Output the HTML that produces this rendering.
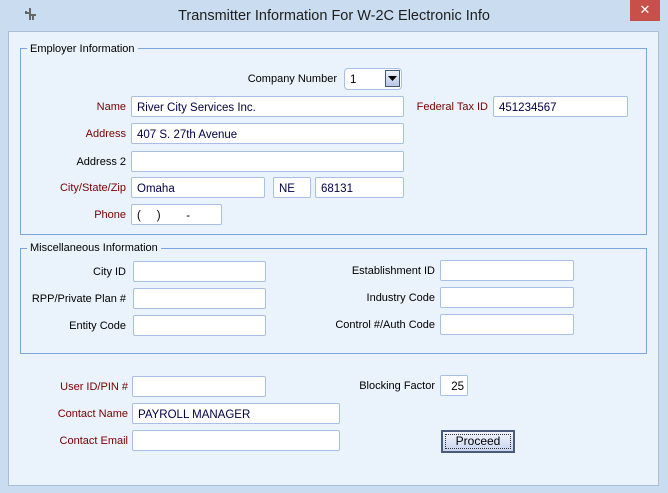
<!DOCTYPE html>
<html><head><style>
body{margin:0;width:668px;height:493px;overflow:hidden;background:#cadcf0;font-family:"Liberation Sans",sans-serif;font-size:11px;position:relative}
div,span{position:absolute;box-sizing:border-box}
.client{left:8px;top:31px;width:651px;height:455px;background:#eaf2fb;border:1px solid #a9bfd6}
.title{left:0;top:8px;width:668px;text-align:center;font-size:14.5px;color:#1e1e1e}
.close{left:630px;top:0;width:30px;height:21px;background:#c7504a;color:#fff;text-align:center;font-size:13px;line-height:20px}
.g{border:1px solid #7aa6dc}
.gt{background:#eaf2fb;padding:0 3px;color:#000;font-size:11px}
.in{background:#fff;border:1px solid #a8c0e6;border-radius:2px;height:21px;padding:3px 5px 0;line-height:16px;color:#000046;font-size:11.5px;white-space:nowrap}
.l{text-align:right;width:140px;white-space:nowrap;color:#000}
.r{color:#7a0000}
.btn{left:441px;top:430px;width:74px;height:23px;border:2px solid #4c5c78;background:linear-gradient(#f2f5fb,#c8d4ee);text-align:center;line-height:19px;font-size:12px;color:#000}
.btn span{left:2px;top:2px;right:2px;bottom:2px;border:1px dotted #333}
</style></head><body>
<div style="left:24px;top:7px;width:14px;height:14px">
<svg width="14" height="14"><path d="M6 1v12M1 6h5M6 8h6M9 8v5M2 4v2" stroke="#666" stroke-width="2" fill="none"/></svg></div>
<div class="title">Transmitter Information For W-2C Electronic Info</div>
<div class="close">✕</div>
<div class="client"></div>

<div class="g" style="left:20px;top:48px;width:627px;height:187px"></div>
<span class="gt" style="left:27px;top:43px">Employer Information</span>
<div class="g" style="left:20px;top:248px;width:627px;height:106px"></div>
<span class="gt" style="left:27px;top:242px">Miscellaneous Information</span>

<span class="l" style="left:197px;top:73px">Company Number</span>
<div class="in" style="left:344px;top:68px;width:58px;height:22px;border-radius:4px;color:#000">1</div>
<div style="left:385px;top:70px;width:15px;height:17px;border:1px solid #44556e;background:linear-gradient(#eef2fa,#b7c6e6)"></div>
<svg style="position:absolute;left:388px;top:76px" width="9" height="5"><path d="M0 0h9L4.5 5z" fill="#000"/></svg>

<span class="l r" style="left:-14px;top:101px">Name</span>
<div class="in" style="left:131px;top:96px;width:273px">River City Services Inc.</div>
<span class="l r" style="left:348px;top:101px">Federal Tax ID</span>
<div class="in" style="left:493px;top:96px;width:135px">451234567</div>
<span class="l r" style="left:-14px;top:128px">Address</span>
<div class="in" style="left:131px;top:123px;width:273px">407 S. 27th Avenue</div>
<span class="l" style="left:-14px;top:156px">Address 2</span>
<div class="in" style="left:131px;top:151px;width:273px"></div>
<span class="l r" style="left:-14px;top:182px">City/State/Zip</span>
<div class="in" style="left:131px;top:177px;width:134px">Omaha</div>
<div class="in" style="left:273px;top:177px;width:38px">NE</div>
<div class="in" style="left:315px;top:177px;width:89px">68131</div>
<span class="l r" style="left:-14px;top:209px">Phone</span>
<div class="in" style="left:131px;top:204px;width:91px;color:#000">(&nbsp;&nbsp;&nbsp;&nbsp;&nbsp;)&nbsp;&nbsp;&nbsp;&nbsp;&nbsp;&nbsp;&nbsp;&nbsp;-</div>

<span class="l" style="left:-14px;top:266px">City ID</span>
<div class="in" style="left:133px;top:261px;width:133px"></div>
<span class="l" style="left:-14px;top:293px">RPP/Private Plan #</span>
<div class="in" style="left:133px;top:288px;width:133px"></div>
<span class="l" style="left:-14px;top:320px">Entity Code</span>
<div class="in" style="left:133px;top:315px;width:133px"></div>
<span class="l" style="left:295px;top:265px">Establishment ID</span>
<div class="in" style="left:440px;top:260px;width:134px"></div>
<span class="l" style="left:295px;top:292px">Industry Code</span>
<div class="in" style="left:440px;top:287px;width:134px"></div>
<span class="l" style="left:295px;top:319px">Control #/Auth Code</span>
<div class="in" style="left:440px;top:314px;width:134px"></div>

<span class="l r" style="left:-12px;top:381px">User ID/PIN #</span>
<div class="in" style="left:132px;top:376px;width:134px"></div>
<span class="l r" style="left:-12px;top:408px">Contact Name</span>
<div class="in" style="left:132px;top:403px;width:208px">PAYROLL MANAGER</div>
<span class="l r" style="left:-12px;top:435px">Contact Email</span>
<div class="in" style="left:132px;top:430px;width:208px"></div>
<span class="l" style="left:295px;top:380px">Blocking Factor</span>
<div class="in" style="left:440px;top:375px;width:28px;text-align:right;padding-right:3px;color:#000">25</div>
<div class="btn"><span></span>Proceed</div>
</body></html>
